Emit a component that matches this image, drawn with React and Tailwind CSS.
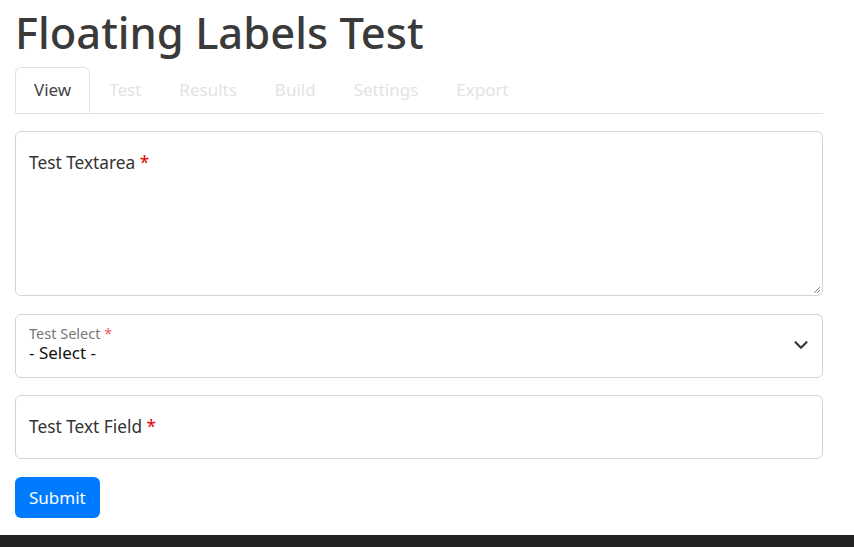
import React from 'react';
import { ChevronDown } from 'lucide-react';

const tabs = ['View', 'Test', 'Results', 'Build', 'Settings', 'Export'];

const Req = ({ faded = false }) => (
  <span className={faded ? 'text-[#f0595f]' : 'text-[#e00000]'}> *</span>
);

const App = () => {
  return (
    <div
      className="min-h-[547px] bg-white flex flex-col text-[#333333]"
      style={{ fontFamily: '"Noto Sans", "Open Sans", sans-serif' }}
    >
      <div className="flex-1 pl-[15px]">
        <div className="w-[808px]">
          <h1 className="text-[43.5px] font-medium leading-[1.2] pt-[6px] mb-[9px] text-[#3a3a3a]">
            Floating Labels Test
          </h1>

          {/* tabs */}
          <div className="flex border-b border-[#dee2e6]">
            {tabs.map((t, i) => (
              <div
                key={t}
                className={
                  i === 0
                    ? 'px-[18px] h-[46px] flex items-center text-[17px] text-[#444] border border-[#dee2e6] border-b-white rounded-t-[6px] -mb-px bg-white'
                    : 'px-[19px] h-[46px] flex items-center text-[17px] text-[#e3e3e3]'
                }
              >
                {t}
              </div>
            ))}
          </div>

          {/* form */}
          <div className="mt-[17px] flex flex-col">
            <div className="relative h-[165px] border border-[#ced4da] rounded-[6px] px-[13px] pt-[18px]">
              <span className="text-[17.3px]">
                Test Textarea<Req />
              </span>
              <svg className="absolute right-[1px] bottom-[1px]" width="8" height="8" viewBox="0 0 8 8">
                <path d="M7 1L1 7M7 4L4 7" stroke="#888" strokeWidth="1" />
              </svg>
            </div>

            <div className="relative mt-[18px] h-[64px] border border-[#ced4da] rounded-[6px] px-[13px] pt-[9px] flex flex-col">
              <span className="text-[14.5px] leading-[18px] text-[#777]">
                Test Select<Req faded />
              </span>
              <span className="text-[17px] leading-[22px] text-[#111]">- Select -</span>
              <ChevronDown className="absolute right-[10px] top-[19px] w-[22px] h-[22px] text-[#343a40]" strokeWidth={2.4} />
            </div>

            <div className="mt-[17px] h-[64px] border border-[#ced4da] rounded-[6px] px-[13px] flex items-center">
              <span className="text-[17.3px]">
                Test Text Field<Req />
              </span>
            </div>

            <div className="mt-[18px]">
              <button className="bg-[#007bff] text-white text-[17px] h-[41px] px-[14px] rounded-[6px]">
                Submit
              </button>
            </div>
          </div>
        </div>
      </div>
      <div className="h-[12px] bg-[#222222]" />
    </div>
  );
};

export default App;
